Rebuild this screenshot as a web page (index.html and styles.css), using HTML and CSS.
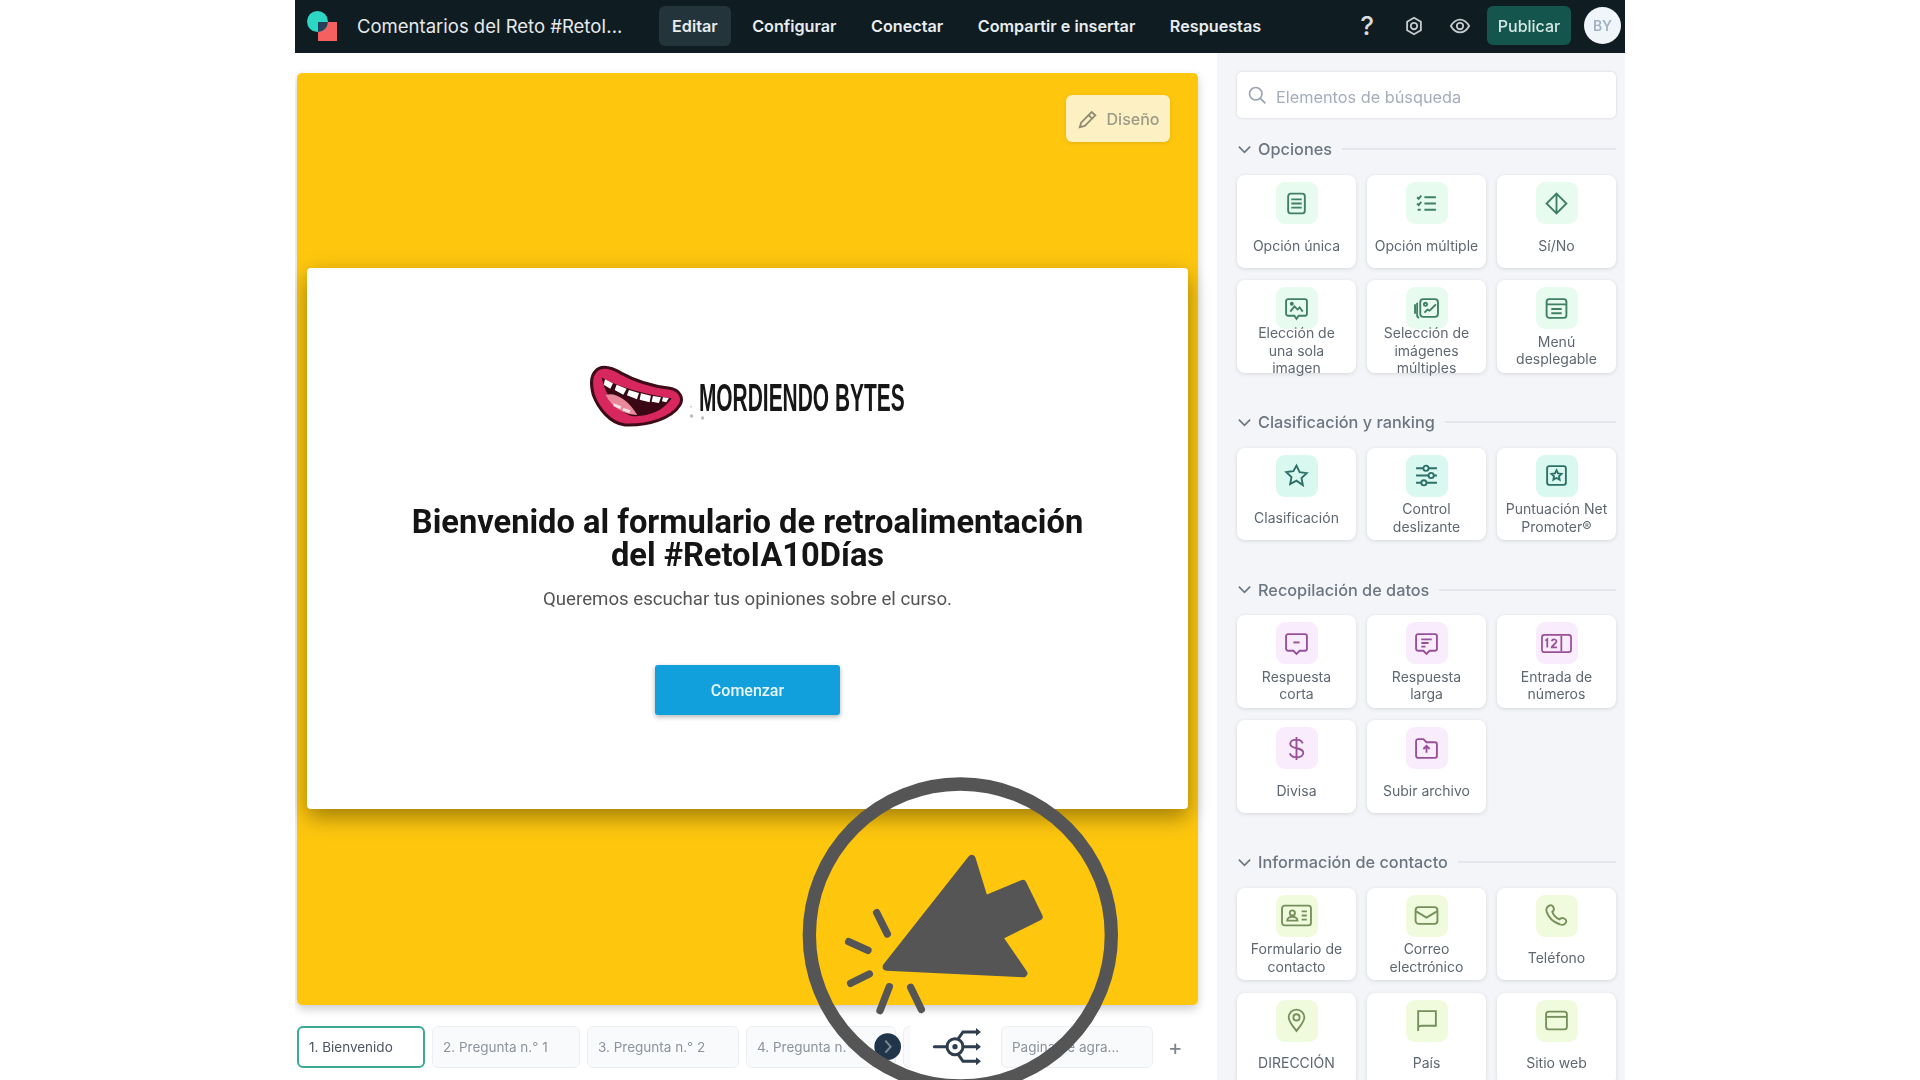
FILE: index.html
```html
<!DOCTYPE html>
<html lang="es">
<head>
    <meta charset="UTF-8">
    <title>Comentarios del Reto</title>
    <link rel="stylesheet" href="styles.css">
</head>
<body>
<div class="app">
    <div class="shell">
        <!-- Top bar -->
        <div class="topbar">
            <svg class="brand" viewBox="0 0 30 30">
                <rect x="11" y="11" width="19" height="19" fill="#f4605f"/>
                <circle cx="10.500" cy="10.500" r="10.500" fill="#2cd5c4"/>
                <path d="M11 11h10a10.500 10.500 0 0 1-10 10z" fill="#25405a"/>
            </svg>
            <span class="doc-title">Comentarios del Reto #RetoI...</span>
            <nav class="nav">
                <a class="nav-item active">Editar</a>
                <a class="nav-item">Configurar</a>
                <a class="nav-item">Conectar</a>
                <a class="nav-item">Compartir e insertar</a>
                <a class="nav-item">Respuestas</a>
            </nav>
            <div class="top-actions">
                <span class="help">?</span>
                <svg class="top-ico" viewBox="0 0 24 24"><path d="M12 3l7.500 4.300v9.400L12 21l-7.500-4.300V7.300z"/><circle cx="12" cy="12" r="3.500"/></svg>
                <svg class="top-ico" viewBox="0 0 24 24"><path d="M2 12c3-5 6.500-7 10-7s7 2 10 7c-3 5-6.500 7-10 7s-7-2-10-7z"/><circle cx="12" cy="12" r="3.500"/></svg>
                <button class="publish">Publicar</button>
                <span class="avatar">BY</span>
            </div>
        </div>

        <div class="workspace">
            <!-- Canvas and page tabs -->
            <div class="main">
                <div class="canvas">
                    <div class="design-btn">
                        <svg viewBox="0 0 24 24"><path d="M3 21l1.500-5L16 4.500l4 3.500L8.500 19.500z"/><path d="M13 8l3.500 3.500"/></svg>
                        Diseño
                    </div>
                    <div class="welcome-card">
                        <svg class="logo" viewBox="90 75 955 180">
                            <path d="M105 95C125 70 160 85 185 100C230 125 290 140 330 145C360 150 372 175 360 195C335 235 265 258 195 255C150 250 115 205 100 165C92 135 92 110 105 95Z" fill="#d8265e" stroke="#3d0c18" stroke-width="9"/>
                            <path d="M125 112C170 140 260 165 335 175C310 215 260 232 215 228C170 215 135 165 125 112Z" fill="#3a0814"/>
                            <path d="M135 118l24 12-8 16-20-12zM170 134l30 12-10 18-26-14zM207 150l30 9-6 19-30-12zM243 160l30 7-4 20-30-8zM279 168l24 4-6 17-22-4zM309 172l18 2-8 13-13-3z" fill="#fff"/>
                            <path d="M137 165C165 155 205 180 232 225C190 225 155 200 137 165Z" fill="#e88a9c"/>
                            <path d="M160 190l24 9-3 8-20-8zM190 204l22 7-4 8-20-8z" fill="#f7e4e6"/>
                            <circle cx="395" cy="228" r="5" fill="#bbb"/><circle cx="428" cy="234" r="5" fill="#bbb"/><circle cx="393" cy="200" r="3" fill="#ccc"/>
                            <text class="logo-text" x="417" y="214" textLength="618" lengthAdjust="spacingAndGlyphs">MORDIENDO BYTES</text>
                        </svg>
                        <h1>Bienvenido al formulario de retroalimentación<br>del #RetoIA10Días</h1>
                        <p>Queremos escuchar tus opiniones sobre el curso.</p>
                        <button class="start-btn">Comenzar</button>
                    </div>
                </div>
                <div class="tabs">
                    <div class="tab current">1. Bienvenido</div>
                    <div class="tab t2">2. Pregunta n.° 1</div>
                    <div class="tab t3">3. Pregunta n.° 2</div>
                    <div class="tab t4">4. Pregunta n.</div>
                    <div class="tab t5"></div>
                    <div class="tab t6">Pagina de agra...</div>
                    <span class="add-tab">+</span>
                </div>
            </div>

            <!-- Elements sidebar -->
            <div class="sidebar">
                <div class="search">
                    <svg viewBox="0 0 24 24"><circle cx="10.500" cy="10.500" r="7.500"/><path d="M16 16l6 6"/></svg>
                    <span>Elementos de búsqueda</span>
                </div>

                <div class="section-head"><svg viewBox="0 0 16 16"><path d="M2 5l6 6 6-6"/></svg><span>Opciones</span><i></i></div>
                <div class="grid green">
                    <div class="el"><div class="el-ico"><svg viewBox="0 0 24 24"><rect x="4" y="2.500" width="16" height="19" rx="2.500"/><path d="M7 8h10M7 12h10M7 16h10"/></svg></div><div class="el-label">Opción única</div></div>
                    <div class="el"><div class="el-ico"><svg viewBox="0 0 24 24"><path d="M3 6l1.500 1.500L7 4.500M3 12l1.500 1.500L7 10.500M10 6h11M10 12h11M10 18h11M3.500 18h3"/></svg></div><div class="el-label">Opción múltiple</div></div>
                    <div class="el"><div class="el-ico"><svg viewBox="0 0 24 24"><path d="M12 2.500l9.500 9.500-9.500 9.500L2.500 12zM12 2.500v19"/></svg></div><div class="el-label">Sí/No</div></div>
                    <div class="el"><div class="el-ico"><svg viewBox="0 0 24 24"><path d="M4 3h16a2 2 0 0 1 2 2v12a2 2 0 0 1-2 2h-6l-2 3-2-3H4a2 2 0 0 1-2-2V5a2 2 0 0 1 2-2z"/><path d="M6 15l4-5 3 3 2-2 3 4"/><circle cx="7.500" cy="7.500" r="1"/></svg></div><div class="el-label">Elección de<br>una sola<br>imagen</div></div>
                    <div class="el"><div class="el-ico"><svg viewBox="0 0 24 24"><rect x="6" y="3" width="17" height="17" rx="3"/><path d="M3 6.500v12A2.500 2.500 0 0 0 5 21M1 8v9"/><path d="M10 16l3-3 2 1 6-6"/><circle cx="11" cy="8" r="1.500"/></svg></div><div class="el-label">Selección de<br>imágenes<br>múltiples</div></div>
                    <div class="el"><div class="el-ico"><svg viewBox="0 0 24 24"><rect x="2.500" y="3" width="19" height="18" rx="2.500"/><path d="M2.500 8h19M7 12.500h10M7 16.500h10"/></svg></div><div class="el-label">Menú<br>desplegable</div></div>
                </div>

                <div class="section-head"><svg viewBox="0 0 16 16"><path d="M2 5l6 6 6-6"/></svg><span>Clasificación y ranking</span><i></i></div>
                <div class="grid teal">
                    <div class="el"><div class="el-ico"><svg viewBox="0 0 24 24"><path d="M12 2.500l3 6.300 6.800.9-5 4.700 1.300 6.800L12 17l-6.100 3.200 1.300-6.800-5-4.700 6.800-.9z"/></svg></div><div class="el-label">Clasificación</div></div>
                    <div class="el"><div class="el-ico"><svg viewBox="0 0 24 24"><path d="M2 5h7M14 5h8M2 12h12M19 12h3M2 19h5M12 19h10"/><circle cx="11.500" cy="5" r="2.500"/><circle cx="16.500" cy="12" r="2.500"/><circle cx="9.500" cy="19" r="2.500"/></svg></div><div class="el-label">Control<br>deslizante</div></div>
                    <div class="el"><div class="el-ico"><svg viewBox="0 0 24 24"><rect x="3" y="3" width="18" height="18" rx="2"/><path d="M12 7l1.500 3 3.300.4-2.400 2.300.6 3.300-3-1.600-3 1.600.6-3.300-2.400-2.300 3.300-.4z"/></svg></div><div class="el-label">Puntuación Net<br>Promoter®</div></div>
                </div>

                <div class="section-head"><svg viewBox="0 0 16 16"><path d="M2 5l6 6 6-6"/></svg><span>Recopilación de datos</span><i></i></div>
                <div class="grid purple">
                    <div class="el"><div class="el-ico"><svg viewBox="0 0 24 24"><path d="M4 3h16a2 2 0 0 1 2 2v12a2 2 0 0 1-2 2h-5l-3 3-3-3H4a2 2 0 0 1-2-2V5a2 2 0 0 1 2-2z"/><path d="M9 11h6"/></svg></div><div class="el-label">Respuesta<br>corta</div></div>
                    <div class="el"><div class="el-ico"><svg viewBox="0 0 24 24"><path d="M4 3h16a2 2 0 0 1 2 2v12a2 2 0 0 1-2 2h-5l-3 3-3-3H4a2 2 0 0 1-2-2V5a2 2 0 0 1 2-2z"/><path d="M7 8h10M7 11.500h7M7 15h4"/></svg></div><div class="el-label">Respuesta<br>larga</div></div>
                    <div class="el"><div class="el-ico wide"><svg viewBox="0 0 32 24"><rect x="1" y="3" width="30" height="18" rx="2.500"/><path d="M4.500 9l2-1.500V16M11 9.500c1-2.500 5-2 5 .5 0 2-5 4-5 6h5.500M21 4v16"/></svg></div><div class="el-label">Entrada de<br>números</div></div>
                    <div class="el"><div class="el-ico"><svg viewBox="0 0 24 24"><path d="M18 7c-1-2.500-3.500-3.500-6-3.500-3.500 0-6 1.700-6 4.200C6 13.500 18.500 10 18.500 16c0 2.800-3 4.500-6.500 4.500s-5.500-1.500-6.500-3.800M12 1v22"/></svg></div><div class="el-label">Divisa</div></div>
                    <div class="el"><div class="el-ico"><svg viewBox="0 0 24 24"><path d="M2 5a2 2 0 0 1 2-2h5l3 3h8a2 2 0 0 1 2 2v11a2 2 0 0 1-2 2H4a2 2 0 0 1-2-2z"/><path d="M12 16v-6M9 12.500l3-3 3 3"/></svg></div><div class="el-label">Subir archivo</div></div>
                </div>

                <div class="section-head"><svg viewBox="0 0 16 16"><path d="M2 5l6 6 6-6"/></svg><span>Información de contacto</span><i></i></div>
                <div class="grid lime">
                    <div class="el"><div class="el-ico wide"><svg viewBox="0 0 30 24"><rect x="1" y="2.500" width="28" height="19" rx="2.500"/><circle cx="11" cy="9.500" r="2.500"/><path d="M6 17c0-5 10-5 10 0zM20 8h5M20 12h5M20 16h5"/></svg></div><div class="el-label">Formulario de<br>contacto</div></div>
                    <div class="el"><div class="el-ico"><svg viewBox="0 0 24 24"><rect x="1.500" y="4" width="21" height="16" rx="3"/><path d="M2 8l10 6 10-6"/></svg></div><div class="el-label">Correo<br>electrónico</div></div>
                    <div class="el"><div class="el-ico"><svg viewBox="0 0 24 24"><path d="M5 2.500c2-1 3.500 0 4.200 2 .6 1.500.2 3-1.200 4 1 3 4 6 7 7.200 1-1.200 2.500-1.700 4-1 2 .8 3 2.300 2 4.200-1 2-3.500 2.500-6 1.500C8.500 18 4 13 2.600 8.500c-.7-2.500 .4-5 2.400-6z"/></svg></div><div class="el-label">Teléfono</div></div>
                    <div class="el"><div class="el-ico"><svg viewBox="0 0 24 24"><path d="M12 22c-4-5-7.500-9-7.500-13a7.500 7.500 0 0 1 15 0c0 4-3.500 8-7.500 13z"/><circle cx="12" cy="9" r="3"/></svg></div><div class="el-label">DIRECCIÓN</div></div>
                    <div class="el"><div class="el-ico"><svg viewBox="0 0 24 24"><path d="M4 22V3h17v14H8c-2 0-4 .5-4 2"/></svg></div><div class="el-label">País</div></div>
                    <div class="el"><div class="el-ico"><svg viewBox="0 0 24 24"><rect x="2" y="3.500" width="20" height="17" rx="2.500"/><path d="M2 8.500h20"/></svg></div><div class="el-label">Sitio web</div></div>
                </div>
            </div>
        </div>
    </div>

    <!-- Click callout laid over the screenshot -->
    <svg class="callout" viewBox="0 0 1080 960">
        <rect x="392" y="785" width="258" height="175" fill="#fff"/>
        <g fill="none" stroke="#2f3e4e" stroke-width="9" stroke-linecap="round">
            <circle cx="525" cy="860" r="24"/>
            <path d="M463 860h38M549 860h40M535 836l14-20h40M535 884l14 20h40"/>
        </g>
        <circle cx="525" cy="860" r="8" fill="#2f3e4e"/>
        <path d="M588 804l15 12-15 12zM588 848l15 12-15 12zM588 892l15 12-15 12z" fill="#2f3e4e"/>
        <circle cx="323" cy="860" r="40" fill="#20354a"/>
        <path d="M316 842l16 18-16 18" fill="none" stroke="#7c8a97" stroke-width="6"/>
        <circle cx="541" cy="525" r="453" fill="none" stroke="#555" stroke-width="40"/>
        <path d="M575 297L613 420L728 372L776 470L655 530L730 640L320 620Z" fill="#555" stroke="#555" stroke-width="24" stroke-linejoin="round"/>
        <path d="M290 458L322 522M206 545L264 571M212 670L268 642M328 680L300 752M392 682L424 748" fill="none" stroke="#555" stroke-width="22" stroke-linecap="round"/>
    </svg>
</div>
</body>
</html>
```

FILE: styles.css
```css
html, body {
    margin: 0;
    padding: 0;
    height: 100%;
    background: #fff;
    overflow: hidden;
}
body {
    font-family: Inter, "Liberation Sans", sans-serif;
}
.app {
    position: relative;
    width: 1330px;
    height: 1080px;
    margin-left: 295px;
    overflow: hidden;
}
.shell {
    height: 100%;
    display: flex;
    flex-direction: column;
    filter: blur(.6px);
}

/* top bar */
.topbar {
    flex: none;
    height: 53px;
    box-sizing: border-box;
    display: flex;
    align-items: center;
    padding: 0 4px 2px 12px;
    background: #0f1c22;
    color: #e8ecee;
}
.brand {
    width: 30px;
    height: 30px;
    margin-right: 20px;
}
.doc-title {
    font-size: 18.500px;
    width: 302px;
    white-space: nowrap;
    color: #e6e9ea;
}
.nav {
    display: flex;
    gap: 8.500px;
    font-size: 16.200px;
    font-weight: 600;
}
.nav-item {
    padding: 0 13px;
    height: 40px;
    line-height: 40px;
    border-radius: 6px;
}
.nav-item.active {
    background: #23343b;
}
.top-actions {
    margin-left: auto;
    display: flex;
    align-items: center;
}
.help {
    font-size: 26px;
    font-weight: 500;
    color: #d8dcde;
    margin-right: 29px;
}
.top-ico {
    width: 22px;
    height: 22px;
    fill: none;
    stroke: #c4cacd;
    stroke-width: 2;
    margin-right: 24px;
}
.top-ico + .publish {
    margin-left: -8px;
}
.publish {
    width: 84px;
    height: 39px;
    border: 0;
    border-radius: 6px;
    background: #14554d;
    color: #d5e8e4;
    font-family: inherit;
    font-size: 16px;
    font-weight: 500;
}
.avatar {
    width: 37px;
    height: 37px;
    margin-left: 13px;
    border-radius: 50%;
    background: #f0f5fa;
    color: #a3b1c4;
    font-size: 14px;
    font-weight: 600;
    text-align: center;
    line-height: 37px;
}

.workspace {
    flex: 1;
    min-height: 0;
    display: flex;
}

/* canvas */
.main {
    width: 922px;
    flex: none;
    box-sizing: border-box;
    padding: 20px 19px 0 2px;
}
.canvas {
    height: 932px;
    box-sizing: border-box;
    padding: 22px 10px 0;
    display: flex;
    flex-direction: column;
    background: #fec70e;
    border-radius: 5px;
    box-shadow: 0 4px 10px rgba(0, 0, 0, .2);
}
.design-btn {
    align-self: flex-end;
    width: 104px;
    height: 47px;
    margin-right: 18px;
    display: flex;
    align-items: center;
    justify-content: center;
    gap: 8px;
    border-radius: 6px;
    background: #fdf1c3;
    box-shadow: 0 1px 4px rgba(0, 0, 0, .12);
    color: #9c9a88;
    font-size: 16px;
    font-weight: 500;
}
.design-btn svg {
    width: 22px;
    height: 22px;
    fill: none;
    stroke: #908c74;
    stroke-width: 2;
}
.welcome-card {
    margin-top: 126px;
    height: 541px;
    box-sizing: border-box;
    padding-top: 97px;
    display: flex;
    flex-direction: column;
    align-items: center;
    background: #fff;
    border-radius: 4px;
    box-shadow: 0 8px 22px rgba(0, 0, 0, .38);
}
.logo {
    width: 318px;
    height: 60px;
    margin-left: 3px;
    overflow: visible;
}
.logo-text {
    font-family: "Liberation Sans", sans-serif;
    font-weight: 700;
    font-size: 116px;
    fill: #161616;
}
.welcome-card h1 {
    margin: 81px 0 0;
    font-family: Roboto, sans-serif;
    font-size: 32.650px;
    line-height: 33px;
    font-weight: 700;
    text-align: center;
    color: #141414;
}
.welcome-card p {
    margin: 17px 0 0;
    font-family: Roboto, sans-serif;
    font-size: 18.650px;
    line-height: 20px;
    color: #555;
}
.start-btn {
    margin-top: 56px;
    width: 185px;
    height: 50px;
    border: 0;
    border-radius: 3px;
    background: #12a0dd;
    box-shadow: 0 2px 5px rgba(0, 0, 0, .3);
    color: #e8f6fc;
    font-family: Roboto, sans-serif;
    font-size: 16px;
    font-weight: 500;
}

/* page tabs */
.tabs {
    margin-top: 21px;
    display: flex;
    align-items: center;
    gap: 7px;
}
.tab {
    height: 42px;
    box-sizing: border-box;
    padding-left: 10px;
    border: 1px solid #eceef1;
    border-radius: 6px;
    background: #f9fafb;
    color: #8c939c;
    font-size: 13.500px;
    line-height: 40px;
    white-space: nowrap;
}
.tab.current {
    width: 128px;
    border: 2px solid #3aa999;
    background: #fff;
    color: #4d5560;
    line-height: 38px;
}
.tab.t2 { width: 148px; }
.tab.t3 { width: 152px; }
.tab.t4 { width: 150px; }
.tab.t5 { width: 91px; }
.tab.t6 { width: 152px; }
.add-tab {
    margin-left: 8px;
    font-size: 22px;
    color: #7b838c;
}

/* sidebar */
.sidebar {
    width: 408px;
    flex: none;
    box-sizing: border-box;
    padding: 19px 9px 0 20px;
    background: #f3f5f8;
    overflow: hidden;
}
.search {
    height: 46px;
    box-sizing: border-box;
    display: flex;
    align-items: center;
    gap: 9px;
    padding-left: 10px;
    border-radius: 5px;
    background: #fff;
    box-shadow: 0 0 3px rgba(0, 0, 0, .15);
    color: #a5adb9;
    font-size: 16.300px;
}
.search span {
    padding-top: 3px;
}
.search svg {
    width: 20px;
    height: 20px;
    fill: none;
    stroke: #9aa3af;
    stroke-width: 2;
}
.section-head {
    height: 20px;
    margin: 39.500px 0 15.500px;
    display: flex;
    align-items: center;
    color: #6c7681;
    font-size: 16.300px;
    font-weight: 500;
}
.search + .section-head {
    margin-top: 21px;
    margin-bottom: 16px;
}
.section-head svg {
    width: 15px;
    height: 15px;
    margin-right: 6px;
    fill: none;
    stroke: #6c7681;
    stroke-width: 1.800;
}
.section-head i {
    flex: 1;
    height: 2px;
    margin-left: 10px;
    background: #e3e6ea;
}
.grid {
    display: grid;
    grid-template-columns: repeat(3, 1fr);
    grid-auto-rows: 92.500px;
    gap: 12.500px 11px;
}
.el {
    display: flex;
    flex-direction: column;
    align-items: center;
    box-sizing: border-box;
    padding-top: 7px;
    border-radius: 8px;
    background: #fff;
    box-shadow: 0 1px 4px rgba(0, 0, 0, .12);
}
.el-ico {
    flex: none;
    width: 42px;
    height: 42px;
    display: flex;
    align-items: center;
    justify-content: center;
    border-radius: 9px;
}
.el-ico svg {
    width: 25px;
    height: 25px;
    fill: none;
    stroke: currentColor;
    stroke-width: 1.800;
}
.el-ico.wide svg {
    width: 31px;
}
.green .el-ico { background: #e7fbef; color: #3f7f66; }
.teal .el-ico { background: #d9f8f0; color: #2d7068; }
.purple .el-ico { background: #f9ecfc; color: #98509a; }
.lime .el-ico { background: #effbdc; color: #76905c; }
.el-label {
    flex: 1;
    min-height: 0;
    width: 100%;
    box-sizing: border-box;
    padding: 0 6px;
    display: flex;
    align-items: center;
    justify-content: center;
    text-align: center;
    color: #5f6771;
    font-size: 14px;
    line-height: 17.500px;
    position: relative;
    top: -.5px;
}

/* overlay */
.callout {
    position: absolute;
    left: 485px;
    top: 760px;
    width: 360px;
    height: 320px;
}
```
